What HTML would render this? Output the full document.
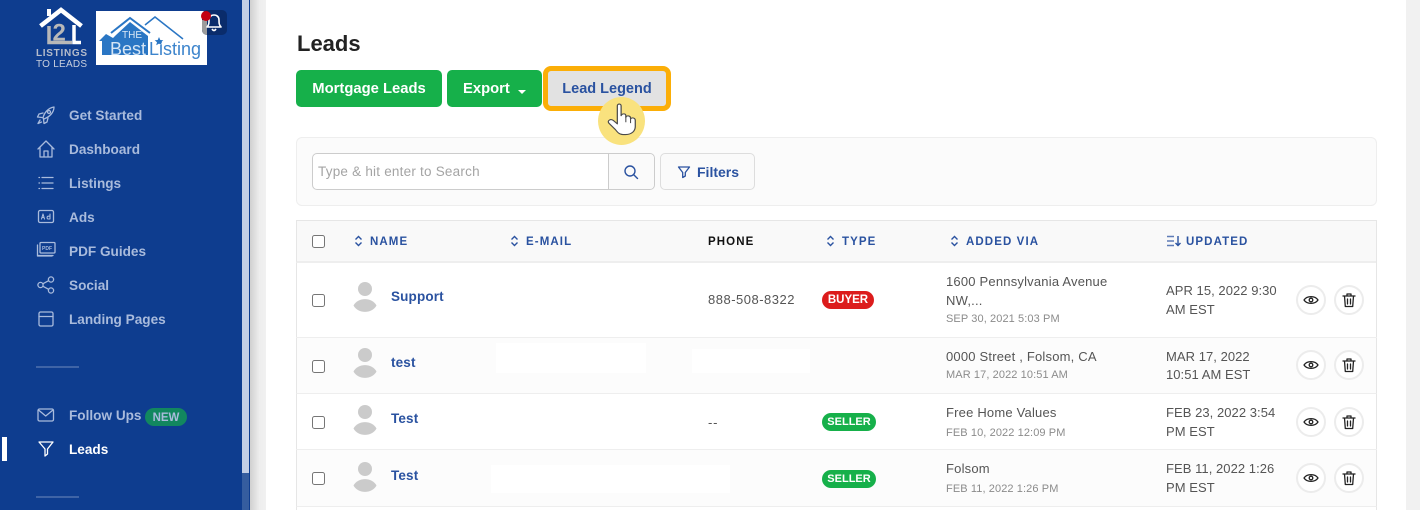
<!DOCTYPE html>
<html><head><meta charset="utf-8"><style>
html,body{margin:0;padding:0;width:1420px;height:510px;overflow:hidden}
body{position:relative;background:#f1f1f1;font-family:"Liberation Sans",sans-serif;color:#444}
div,svg,span.a{position:absolute}
.t{white-space:nowrap;line-height:20px;height:18px}
.n{left:69px;font-weight:700;font-size:13.6px;line-height:20px;color:#a9bbdc}
.ic{left:36px;width:20px;height:20px;fill:none;stroke:#a9bbdc;stroke-width:1.3;stroke-linecap:round;stroke-linejoin:round}
.th{font-weight:700;font-size:11.5px;letter-spacing:1.1px;color:#2a52a0;top:232px}
.sort{width:9px;height:12px;top:235px;fill:none;stroke:#2a52a0;stroke-width:1.4}
.row{left:296px;width:1081px;border-bottom:1px solid #eee;box-sizing:border-box}
.cb{left:312px;width:11px;height:11px;border:1.3px solid #767676;border-radius:2.5px;background:#fff}
.nm{left:391px;font-weight:700;font-size:13.5px;color:#2a52a0;letter-spacing:.15px}
.via{left:946px;font-size:13px;color:#555;letter-spacing:.2px}
.sub{left:946px;font-size:11px;color:#8b8b8b;letter-spacing:.1px}
.upd{left:1166px;font-size:13px;color:#555;letter-spacing:.05px}
.cir{width:26px;height:26px;border:2px solid #ececec;border-radius:50%;background:#fff}
.cir svg{left:5px;top:5px;width:16px;height:16px;fill:none;stroke:#222;stroke-width:1.3;stroke-linecap:round;stroke-linejoin:round}
.bdg{border-radius:9px;color:#fff;font-weight:700;font-size:11.5px;text-align:center;height:18px;line-height:18px}
.wh{background:#fff}
</style></head><body>

<!-- background and sidebar -->
<div style="left:250px;top:0;width:16px;height:510px;background:linear-gradient(90deg,#d0d0d0,#eeeeee 60%,#f1f1f1)"></div>
<div style="left:266px;top:-10px;width:1140px;height:520px;background:#fff;border-radius:8px 8px 0 0"></div>
<div style="left:0;top:0;width:242px;height:510px;background:#0e3d8f"></div>
<div style="left:242px;top:0;width:7px;height:473px;background:#c3cfe5"></div>
<div style="left:242px;top:473px;width:7px;height:37px;background:#355d9f"></div>
<div style="left:249px;top:0;width:1px;height:510px;background:#0e3d8f"></div>

<!-- logo -->
<svg style="left:36px;top:6px;width:50px;height:40px" viewBox="0 0 50 40">
<path d="M4.5 20 L25 4 L45.5 20" fill="none" stroke="#fff" stroke-width="4.5"/>
<rect x="11" y="3" width="4" height="7" fill="#fff"/>
<path d="M13 20 V36.5 H36" fill="none" stroke="#b8b8b8" stroke-width="3.5"/>
<path d="M38 19 V36.5 H45" fill="none" stroke="#fff" stroke-width="3.5"/>
<text x="16.5" y="34.5" font-family="Liberation Sans" font-size="24" font-weight="700" fill="#b8b8b8">2</text>
</svg>
<div class="t" style="left:36px;top:44px;font-size:10px;font-weight:700;letter-spacing:.7px;color:#b5bccb">LISTINGS</div>
<div class="t" style="left:36px;top:55px;font-size:10px;letter-spacing:.25px;color:#c9d0de">TO LEADS</div>
<div class="wh" style="left:96px;top:11px;width:111px;height:54px"></div>
<svg style="left:96px;top:11px;width:111px;height:54px" viewBox="0 0 111 54">
<path d="M6 44 V30 H3 L10 23 L17 27 L20 24 L34 11 L52 25 V44Z" fill="#2a76c4"/>
<path d="M15 22 L34 7 L54 22" fill="none" stroke="#2a76c4" stroke-width="2"/>
<path d="M49 14 L59 6 L87 28" fill="none" stroke="#2a76c4" stroke-width="1.5"/>
<text x="26" y="27" font-family="Liberation Sans" font-size="10" fill="#dce9f6">THE</text>
<text x="14" y="44" font-family="Liberation Sans" font-size="18" fill="#d5e5f5">Best</text>
<text x="53" y="44" font-family="Liberation Sans" font-size="18" fill="#3c84cc">Listing</text>
<path d="M63 26 l1.3 3 3 .2 -2.3 2 .8 3 -2.8-1.6 -2.8 1.6 .8-3 -2.3-2 3-.2z" fill="#2a76c4"/>
</svg>
<div style="left:202px;top:10px;width:25px;height:25px;background:#0a2c6b;border-radius:5px"></div>
<div style="left:202px;top:20px;width:5px;height:15px;background:#9c9c9c;border-radius:0 0 0 5px"></div>
<svg style="left:205px;top:12px;width:18px;height:21px" viewBox="0 0 18 21" fill="none" stroke="#fff" stroke-width="1.6" stroke-linejoin="round"><path d="M2 15 C4 13 4 11 4 8 C4 5 6 3 9 3 C12 3 14 5 14 8 C14 11 14 13 16 15Z"/><path d="M7 17 Q9 20 11 17"/></svg>
<div style="left:201px;top:11px;width:10px;height:10px;background:#c40012;border-radius:50%"></div>

<!-- nav -->
<svg class="ic" style="top:105px" viewBox="0 0 20 20"><path d="M7 13 C8 8 12 3 18 2 C18 8 13 12 8 14Z"/><circle cx="13" cy="7" r="1.5"/><path d="M7 8 L3 9 L1.5 12 L6 12.5 M12 13 L11 17 L8 18.5 L7.5 14 M4 15 L2 18.5 L5.5 17"/></svg>
<div class="t n" style="top:106px">Get Started</div>
<svg class="ic" style="top:139px" viewBox="0 0 20 20"><path d="M2 10 L10 2 L18 10 M4 8.5 V18 H16 V8.5 M8 18 V12 H12 V18"/></svg>
<div class="t n" style="top:140px">Dashboard</div>
<svg class="ic" style="top:173px" viewBox="0 0 20 20"><path d="M6 4.5 H17 M6 10 H17 M6 15.5 H17 M3 4.5 H3.5 M3 10 H3.5 M3 15.5 H3.5"/></svg>
<div class="t n" style="top:174px">Listings</div>
<svg class="ic" style="top:207px" viewBox="0 0 20 20"><rect x="2.5" y="3.5" width="15" height="12" rx="1.5"/><path d="M5.5 12 L7 7 L8.5 12 M6 10.5 H8 M14 7 V12 H12 A1.5 1.5 0 0 1 12 9.2 H14" stroke-width="1.1"/></svg>
<div class="t n" style="top:208px">Ads</div>
<svg class="ic" style="top:241px" viewBox="0 0 20 20"><rect x="4" y="1.5" width="15" height="10.5" rx="1"/><path d="M1.5 4 V14.5 H17 M1.5 14.5 V15 H16"/><text x="6" y="9" font-size="5" font-weight="700" fill="#a9bbdc" stroke="none" font-family="Liberation Sans">PDF</text></svg>
<div class="t n" style="top:242px">PDF Guides</div>
<svg class="ic" style="top:275px" viewBox="0 0 20 20"><circle cx="4.5" cy="10" r="2.6"/><circle cx="15" cy="4.5" r="2.6"/><circle cx="15" cy="15.5" r="2.6"/><path d="M7 8.7 L12.6 5.7 M7 11.3 L12.6 14.3"/></svg>
<div class="t n" style="top:276px">Social</div>
<svg class="ic" style="top:309px" viewBox="0 0 20 20"><rect x="3" y="3" width="14" height="14" rx="1.5"/><path d="M3 7.5 H17"/></svg>
<div class="t n" style="top:310px;">Landing Pages</div>
<div style="left:36px;top:366px;width:43px;height:2px;background:#3f64a6"></div>
<svg class="ic" style="top:405px" viewBox="0 0 20 20"><rect x="2" y="4" width="15.5" height="12" rx="1.5"/><path d="M2.5 5 L9.7 11 L17 5"/></svg>
<div class="t n" style="top:406px">Follow Ups</div>
<div class="bdg" style="left:145px;top:408px;width:42px;background:#12875f;color:#a9bbdc;line-height:20px">NEW</div>
<div style="left:2px;top:437px;width:5px;height:24px;background:#fff"></div>
<svg class="ic" style="top:439px;stroke:#fff" viewBox="0 0 20 20"><path d="M3 3 H17 L11.5 10 V15 L9 17 V10Z"/></svg>
<div class="t n" style="top:440px;color:#fff">Leads</div>
<div style="left:36px;top:496px;width:43px;height:2px;background:#3f64a6"></div>

<!-- header -->
<div class="t" style="left:297px;top:33px;font-size:22px;line-height:22px;height:22px;font-weight:700;color:#222">Leads</div>
<div class="t" style="left:296px;top:70px;width:146px;height:37px;line-height:39px;background:#16b04a;border-radius:5px;color:#fff;font-weight:700;font-size:14.8px;text-align:center">Mortgage Leads</div>
<div class="t" style="left:447px;top:70px;width:95px;height:37px;line-height:39px;background:#16b04a;border-radius:5px;color:#fff;font-weight:700;font-size:14.8px;text-indent:16px">Export</div>
<div style="left:518px;top:90px;width:0;height:0;border:4px solid transparent;border-top-color:#fff;border-bottom:0"></div>
<div class="t" style="left:543px;top:66px;width:118px;height:35px;line-height:37px;background:#e2e2e2;border:5px solid #fbae07;border-radius:8px;color:#2a52a0;font-weight:700;font-size:14.5px;text-align:center">Lead Legend</div>

<!-- search panel -->
<div style="left:296px;top:137px;width:1079px;height:67px;background:#fbfbfb;border:1px solid #eee;border-radius:6px"></div>
<div style="left:312px;top:153px;width:341px;height:35px;background:#fff;border:1px solid #ccc;border-radius:5px"></div>
<div style="left:608px;top:154px;width:45px;height:35px;background:#fafafa;border-left:1px solid #ccc;border-radius:0 5px 5px 0"></div>
<div class="t" style="left:318px;top:162px;font-size:13.5px;color:#a4a4a4;letter-spacing:.22px">Type &amp; hit enter to Search</div>
<svg style="left:623px;top:164px;width:16px;height:16px" viewBox="0 0 16 16" fill="none" stroke="#2a52a0" stroke-width="1.4" stroke-linecap="round"><circle cx="7" cy="7" r="5"/><path d="M11 11 L14.5 14.5"/></svg>
<div style="left:660px;top:153px;width:93px;height:35px;background:#fafafa;border:1px solid #ddd;border-radius:5px"></div>
<svg style="left:677px;top:165px;width:14px;height:14px" viewBox="0 0 14 14" fill="none" stroke="#2a52a0" stroke-width="1.3" stroke-linejoin="round"><path d="M1.5 2 H12.5 L8.3 7.5 V11 L5.7 12.5 V7.5Z"/></svg>
<div class="t" style="left:697px;top:162px;font-size:14px;font-weight:700;color:#2a52a0">Filters</div>

<!-- pointer highlight -->
<div style="left:598px;top:97px;width:47px;height:48px;border-radius:50%;background:#f9e27e"></div>
<svg style="left:606px;top:101px;width:34px;height:36px" viewBox="0 0 36 44" preserveAspectRatio="none"><path d="M12 6 C12 3 16 3 16 6 V18 C17 15 21 15 21 18 V20 C22 17 26 18 26 21 V22 C27 20 31 20 31 24 V31 C31 37 27 41 21 41 H18 C14 41 12 38 10 35 L3 27 C1 24 5 21 8 24 L12 28Z" fill="#fff" stroke="#4a4a4a" stroke-width="1.3" stroke-linejoin="round"/><path d="M21 19 V26 M26 22 V27" stroke="#4a4a4a" stroke-width="1.1"/></svg>

<!-- table -->
<div style="left:296px;top:220px;width:1079px;height:40px;background:#f9f9f9;border:1px solid #e6e6e6;border-bottom:2px solid #eee"></div>
<div style="left:296px;top:263px;width:1px;height:247px;background:#e6e6e6"></div>
<div style="left:1376px;top:220px;width:1px;height:290px;background:#e6e6e6"></div>
<div class="row" style="top:263px;height:75px"></div>
<div class="row" style="top:338px;height:56px;background:#fcfcfc;border-left:1px solid #e6e6e6;border-right:1px solid #e6e6e6"></div>
<div class="row" style="top:394px;height:56px"></div>
<div class="row" style="top:450px;height:57px;background:#fcfcfc;border-left:1px solid #e6e6e6;border-right:1px solid #e6e6e6"></div>

<div class="cb" style="top:235px"></div>
<svg class="sort" style="left:354px" viewBox="0 0 9 12"><path d="M1.5 4.5 L4.5 1.5 L7.5 4.5 M1.5 7.5 L4.5 10.5 L7.5 7.5"/></svg>
<div class="t th" style="left:370px">NAME</div>
<svg class="sort" style="left:510px" viewBox="0 0 9 12"><path d="M1.5 4.5 L4.5 1.5 L7.5 4.5 M1.5 7.5 L4.5 10.5 L7.5 7.5"/></svg>
<div class="t th" style="left:526px">E-MAIL</div>
<div class="t th" style="left:708px;color:#111">PHONE</div>
<svg class="sort" style="left:826px" viewBox="0 0 9 12"><path d="M1.5 4.5 L4.5 1.5 L7.5 4.5 M1.5 7.5 L4.5 10.5 L7.5 7.5"/></svg>
<div class="t th" style="left:842px">TYPE</div>
<svg class="sort" style="left:950px" viewBox="0 0 9 12"><path d="M1.5 4.5 L4.5 1.5 L7.5 4.5 M1.5 7.5 L4.5 10.5 L7.5 7.5"/></svg>
<div class="t th" style="left:966px">ADDED VIA</div>
<svg style="left:1167px;top:235px;width:15px;height:12px" viewBox="0 0 15 12" fill="none" stroke="#2a52a0" stroke-width="1.4"><path d="M0 1.5 H7 M0 6 H7 M0 10.5 H7" opacity=".75"/><path d="M11 1 V10.5 M8.5 8 L11 10.5 L13.5 8"/></svg>
<div class="t th" style="left:1186px">UPDATED</div>

<!-- row 1 -->
<div class="cb" style="top:294px"></div>
<svg style="left:353px;top:281px;width:24px;height:31px" viewBox="0 0 24 31" fill="#cbcbcb"><circle cx="12" cy="8" r="7"/><path d="M.5 24.5 C5 16 19 16 23.5 24.5 C19 33 5 33 .5 24.5Z"/></svg>
<div class="t nm" style="top:287px">Support</div>
<div class="t" style="left:708px;top:290px;font-size:13px;color:#555;letter-spacing:.5px">888-508-8322</div>
<div class="bdg" style="left:822px;top:291px;width:52px;background:#dc1c1c;font-size:11.5px;line-height:19px">BUYER</div>
<div class="t via" style="top:272px">1600 Pennsylvania Avenue</div>
<div class="t via" style="top:291px">NW,...</div>
<div class="t sub" style="top:309px">SEP 30, 2021 5:03 PM</div>
<div class="t upd" style="top:281px">APR 15, 2022 9:30</div>
<div class="t upd" style="top:300px">AM EST</div>
<div class="cir" style="left:1296px;top:285px"><svg viewBox="0 0 16 16"><path d="M1 8 C4 3.5 12 3.5 15 8 C12 12.5 4 12.5 1 8Z"/><circle cx="8" cy="8" r="1.8"/></svg></div>
<div class="cir" style="left:1334px;top:285px"><svg viewBox="0 0 16 16"><path d="M2 4 H14 M6 4 V2 H10 V4 M3.5 4 L4.3 14.5 H11.7 L12.5 4 M6.5 7 V12 M9.5 7 V12"/></svg></div>

<!-- row 2 -->
<div class="cb" style="top:360px"></div>
<svg style="left:353px;top:347px;width:24px;height:31px" viewBox="0 0 24 31" fill="#cbcbcb"><circle cx="12" cy="8" r="7"/><path d="M.5 24.5 C5 16 19 16 23.5 24.5 C19 33 5 33 .5 24.5Z"/></svg>
<div class="t nm" style="top:353px">test</div>
<div class="wh" style="left:496px;top:343px;width:150px;height:30px"></div>
<div class="wh" style="left:692px;top:349px;width:118px;height:24px"></div>
<div class="t via" style="top:347px">0000 Street , Folsom, CA</div>
<div class="t sub" style="top:365px">MAR 17, 2022 10:51 AM</div>
<div class="t upd" style="top:347px">MAR 17, 2022</div>
<div class="t upd" style="top:365px">10:51 AM EST</div>
<div class="cir" style="left:1296px;top:350px"><svg viewBox="0 0 16 16"><path d="M1 8 C4 3.5 12 3.5 15 8 C12 12.5 4 12.5 1 8Z"/><circle cx="8" cy="8" r="1.8"/></svg></div>
<div class="cir" style="left:1334px;top:350px"><svg viewBox="0 0 16 16"><path d="M2 4 H14 M6 4 V2 H10 V4 M3.5 4 L4.3 14.5 H11.7 L12.5 4 M6.5 7 V12 M9.5 7 V12"/></svg></div>

<!-- row 3 -->
<div class="cb" style="top:416px"></div>
<svg style="left:353px;top:404px;width:24px;height:31px" viewBox="0 0 24 31" fill="#cbcbcb"><circle cx="12" cy="8" r="7"/><path d="M.5 24.5 C5 16 19 16 23.5 24.5 C19 33 5 33 .5 24.5Z"/></svg>
<div class="t nm" style="top:409px">Test</div>
<div class="t" style="left:708px;top:413px;font-size:13px;color:#555;letter-spacing:.8px">--</div>
<div class="bdg" style="left:822px;top:413px;width:54px;background:#16b04a;font-size:11px;line-height:19px">SELLER</div>
<div class="t via" style="top:403px">Free Home Values</div>
<div class="t sub" style="top:423px">FEB 10, 2022 12:09 PM</div>
<div class="t upd" style="top:403px">FEB 23, 2022 3:54</div>
<div class="t upd" style="top:422px">PM EST</div>
<div class="cir" style="left:1296px;top:407px"><svg viewBox="0 0 16 16"><path d="M1 8 C4 3.5 12 3.5 15 8 C12 12.5 4 12.5 1 8Z"/><circle cx="8" cy="8" r="1.8"/></svg></div>
<div class="cir" style="left:1334px;top:407px"><svg viewBox="0 0 16 16"><path d="M2 4 H14 M6 4 V2 H10 V4 M3.5 4 L4.3 14.5 H11.7 L12.5 4 M6.5 7 V12 M9.5 7 V12"/></svg></div>

<!-- row 4 -->
<div class="cb" style="top:472px"></div>
<svg style="left:353px;top:461px;width:24px;height:31px" viewBox="0 0 24 31" fill="#cbcbcb"><circle cx="12" cy="8" r="7"/><path d="M.5 24.5 C5 16 19 16 23.5 24.5 C19 33 5 33 .5 24.5Z"/></svg>
<div class="t nm" style="top:466px">Test</div>
<div class="wh" style="left:491px;top:465px;width:239px;height:28px"></div>
<div class="bdg" style="left:822px;top:470px;width:54px;background:#16b04a;font-size:11px;line-height:19px">SELLER</div>
<div class="t via" style="top:459px">Folsom</div>
<div class="t sub" style="top:479px">FEB 11, 2022 1:26 PM</div>
<div class="t upd" style="top:459px">FEB 11, 2022 1:26</div>
<div class="t upd" style="top:478px">PM EST</div>
<div class="cir" style="left:1296px;top:463px"><svg viewBox="0 0 16 16"><path d="M1 8 C4 3.5 12 3.5 15 8 C12 12.5 4 12.5 1 8Z"/><circle cx="8" cy="8" r="1.8"/></svg></div>
<div class="cir" style="left:1334px;top:463px"><svg viewBox="0 0 16 16"><path d="M2 4 H14 M6 4 V2 H10 V4 M3.5 4 L4.3 14.5 H11.7 L12.5 4 M6.5 7 V12 M9.5 7 V12"/></svg></div>

</body></html>
